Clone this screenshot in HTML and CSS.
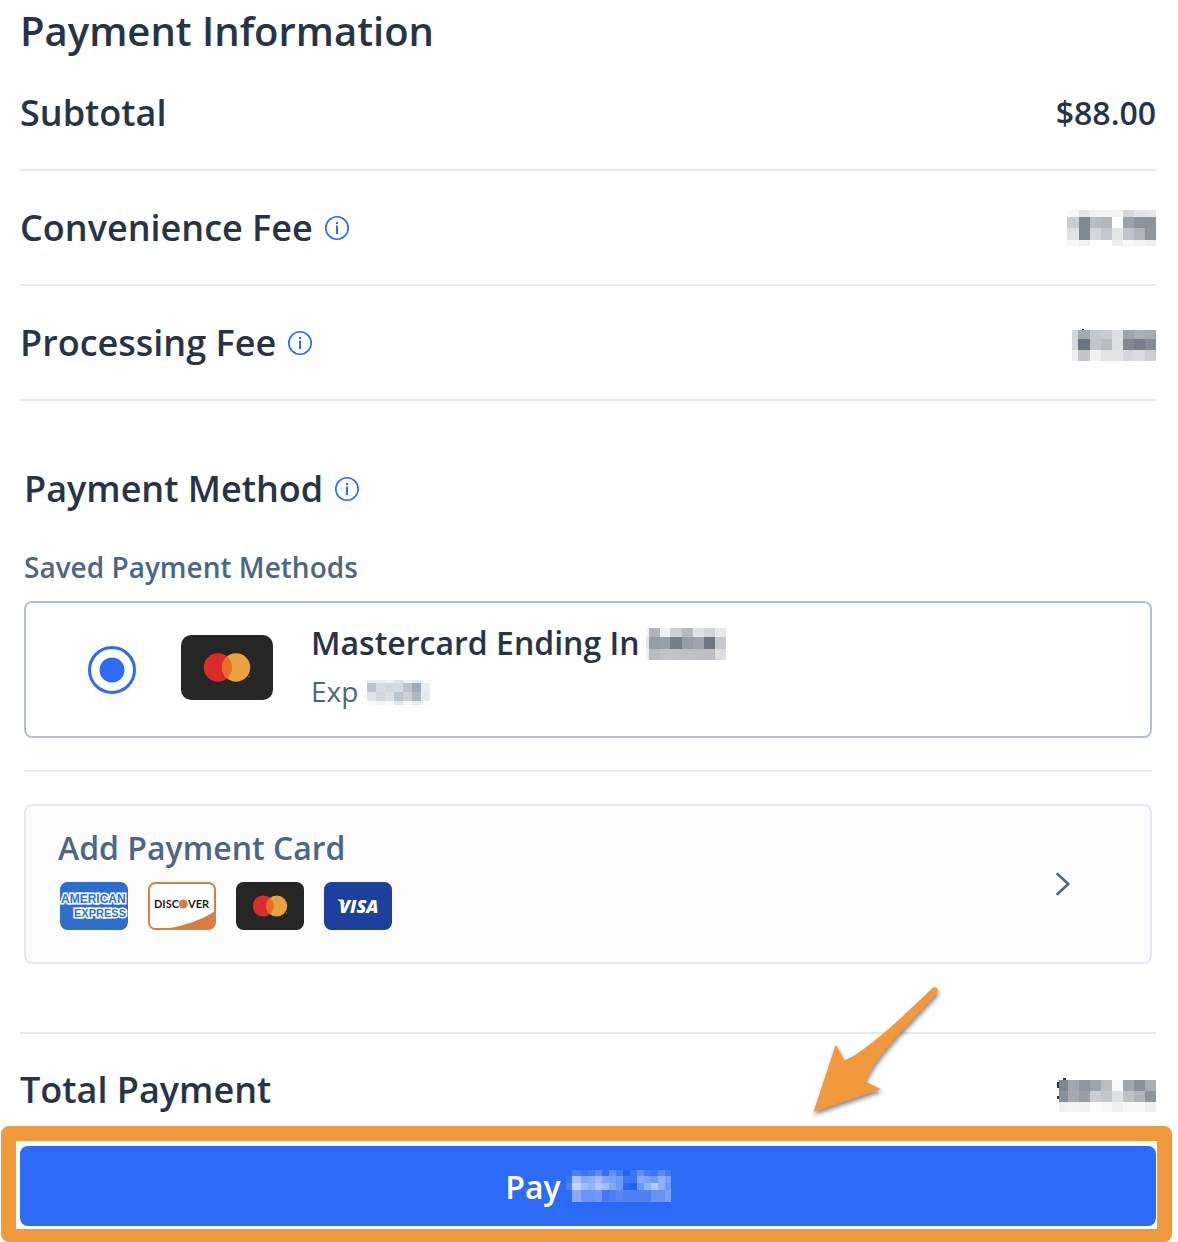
FILE: index.html
```
<!DOCTYPE html>
<html lang="en">
<head>
    <meta charset="UTF-8">
    <meta name="viewport" content="width=device-width, initial-scale=1.0">
    <title>Payment Information</title>
    <link rel="stylesheet" href="styles.css">
</head>
<body>
    <!-- Shared symbols -->
    <svg class="symbols" aria-hidden="true">
        <symbol id="icon-info" viewBox="0 0 24 24">
            <circle cx="12" cy="12" r="11.2" fill="none" stroke="currentColor" stroke-width="1.6"/>
            <circle cx="12" cy="6.9" r="1.2" fill="currentColor"/>
            <path d="M12 9.5V18" stroke="currentColor" stroke-width="2"/>
        </symbol>
        <symbol id="logo-mastercard" viewBox="0 0 68 48">
            <rect width="68" height="48" rx="7.5" fill="#262626"/>
            <circle cx="27.3" cy="24" r="10.5" fill="#d92d2a"/>
            <circle cx="40.7" cy="24" r="10.5" fill="#e8a341"/>
            <path d="M34 15.900a10.500 10.500 0 0 1 0 16.200a10.500 10.500 0 0 1 0-16.200z" fill="#ed6a2d"/>
            <circle cx="50.3" cy="30.700" r="0.5" fill="#e8a341"/>
        </symbol>
    </svg>

    <main class="payment">
        <h1>Payment Information</h1>

        <!-- Fees -->
        <div class="row">
            <h2>Subtotal</h2>
            <span class="amount">$88.00</span>
        </div>
        <div class="row">
            <h2>Convenience Fee</h2>
            <button type="button" class="info" aria-label="About the convenience fee"><svg><use href="#icon-info"/></svg></button>
            <svg class="mask" data-mask="convenience"></svg>
        </div>
        <div class="row">
            <h2>Processing Fee</h2>
            <button type="button" class="info" aria-label="About the processing fee"><svg><use href="#icon-info"/></svg></button>
            <svg class="mask" data-mask="processing"></svg>
        </div>

        <!-- Payment method -->
        <section class="methods">
            <div class="methods-title">
                <h2>Payment Method</h2>
                <button type="button" class="info" aria-label="About payment methods"><svg><use href="#icon-info"/></svg></button>
            </div>
            <h3>Saved Payment Methods</h3>
            <div class="saved-card">
                <input type="radio" name="method" id="saved-mastercard" checked>
                <label class="saved-label" for="saved-mastercard">
                    <svg class="saved-logo" viewBox="0 0 68 48"><use href="#logo-mastercard"/></svg>
                    <span class="saved-text">
                        <span class="saved-name">Mastercard Ending In <svg class="mask" data-mask="digits"></svg></span>
                        <span class="saved-exp">Exp <svg class="mask" data-mask="expiry"></svg></span>
                    </span>
                </label>
            </div>
            <hr>
            <button type="button" class="add-card">
                <span class="add-body">
                    <span class="add-title">Add Payment Card</span>
                    <span class="logos">
                        <svg class="logo" viewBox="0 0 68 48">
                            <rect width="68" height="48" rx="7.5" fill="#2f6fcb"/>
                            <text class="amex-text" x="1" y="21">AMERICAN</text>
                            <text class="amex-text amex-small" x="14" y="35">EXPRESS</text>
                        </svg>
                        <svg class="logo" viewBox="0 0 68 48">
                            <rect x="1" y="1" width="66" height="46" rx="6.5" fill="#fff"/>
                            <path d="M67 29C54 38 36 44 16 47H60.500a6.500 6.500 0 0 0 6.500-6.500z" fill="#d67e43"/>
                            <rect x="1" y="1" width="66" height="46" rx="6.5" fill="none" stroke="#d67e43" stroke-width="2"/>
                            <text class="discover-text" x="6" y="26">DISC</text>
                            <circle cx="35.300" cy="22" r="4.500" fill="#d67e43"/>
                            <text class="discover-text" x="40" y="26">VER</text>
                        </svg>
                        <svg class="logo" viewBox="0 0 68 48"><use href="#logo-mastercard"/></svg>
                        <svg class="logo" viewBox="0 0 68 48">
                            <rect width="68" height="48" rx="7.5" fill="#1d409c"/>
                            <path d="M13 17.500h6l2 5z" fill="#fff"/>
                            <text class="visa-text" x="15" y="31">VISA</text>
                        </svg>
                    </span>
                </span>
                <svg class="chevron" viewBox="0 0 14 24"><path d="M1.500 2L12.300 12L1.500 22" fill="none" stroke="currentColor" stroke-width="2.600" stroke-linecap="round" stroke-linejoin="round"/></svg>
            </button>
        </section>

        <!-- Total -->
        <div class="row total">
            <h2>Total Payment</h2>
            <svg class="mask" data-mask="total"></svg>
        </div>
        <div class="pay">
            <button type="button" class="pay-button">Pay <svg class="mask" data-mask="pay"></svg></button>
            <div class="highlight"></div>
            <svg class="arrow" viewBox="0 0 170 160" aria-hidden="true">
                <path d="M23.500 142L45.800 74.500L54.500 90.500C78 80 111 48 142.500 18C146 15.500 149.500 19 147 23C122 52 86 84 75.300 111.500L91 119.300Z" fill="#f2993e"/>
            </svg>
        </div>
    </main>

    <script src="masks.js"></script>
</body>
</html>
```

FILE: styles.css
```
* { margin: 0; padding: 0; box-sizing: border-box; }
body {
    font-family: "Open Sans", "Noto Sans", sans-serif;
    background: white; color: #283445;
}
button { font: inherit; border: none; background: none; cursor: pointer; }
svg { display: block; }
.symbols { position: absolute; width: 0; height: 0; }

.payment { padding: 6px 22px 16px 20px; }

h1 { font-size: 40px; line-height: 50px; font-weight: 600; }
h2 { font-size: 36px; line-height: 48px; font-weight: 600; }
h3 {
    font-size: 28px; line-height: 40px; font-weight: 600;
    color: #4c6785; margin: 34px 0 14px;
}

.row {
    display: flex; align-items: center;
    min-height: 115px; border-bottom: 2px solid #e3e8f1;
}
.row .mask, .amount { margin-left: auto; }
.amount { font-size: 32px; font-weight: 600; }
.mask { flex: none; }

.info { margin-left: 12px; color: #2d6bf4; }
.info svg { width: 24px; height: 24px; }

.methods { padding: 64px 4px 68px; }
.methods-title { display: flex; align-items: center; }

.saved-card {
    display: flex; align-items: center;
    padding-left: 62px; border: 2px solid #b0c0d6; border-radius: 8px;
}
.saved-card input {
    appearance: none; flex: none; width: 48px; height: 48px;
    border: 3px solid #2d6bf4; border-radius: 50%;
    background: radial-gradient(circle, #2d6bf4 12px, white 13px);
}
.saved-label {
    flex: 1; display: flex; align-items: center; gap: 38px;
    padding: 16px 0 21px 45px; cursor: pointer;
}
.saved-logo { width: 92px; height: 65px; }
.saved-name, .saved-exp { display: flex; align-items: center; line-height: 48px; }
.saved-name { font-size: 32px; font-weight: 600; gap: 6px; }
.saved-exp { font-size: 28px; color: #4c6785; gap: 9px; }

hr { border: none; border-top: 2px solid #e3e8f1; margin: 32px 0; }

.add-card {
    display: flex; align-items: center; justify-content: space-between;
    width: 100%; padding: 20px 80px 32px 32px; text-align: left;
    background: #fcfcfd; border: 2px solid #e3e8f1; border-radius: 8px;
    color: #4c6785;
}
.add-title { display: block; font-size: 32px; line-height: 44px; font-weight: 600; }
.logos { display: flex; gap: 20px; margin: 12px 0 0 2px; }
.logo { width: 68px; height: 48px; }
.chevron { width: 14px; height: 24px; margin-top: 12px; }

.amex-text {
    font: bold 12px "Liberation Sans", sans-serif;
    fill: #2f6fcb; stroke: white; stroke-width: 3px; paint-order: stroke;
}
.amex-small { font-size: 11px; }
.discover-text { font: bold 11px Lato, sans-serif; fill: #1b1b1b; }
.visa-text { font: italic 800 18px "Open Sans", sans-serif; fill: white; }

.methods + .total { border-top: 2px solid #e3e8f1; border-bottom: none; min-height: 114px; }

.pay { position: relative; }
.pay-button {
    display: flex; align-items: center; justify-content: center; gap: 5px;
    width: 100%; min-height: 80px; border-radius: 8px;
    background: #2d6bf4; color: white; font-size: 32px; font-weight: 600;
}
.highlight {
    position: absolute; inset: -20px -16px -16px -19px;
    border: 15px solid #f2993e; border-bottom-width: 13px;
    border-radius: 8px; pointer-events: none;
}
.arrow {
    position: absolute; top: -176px; right: 196px;
    width: 170px; height: 160px; pointer-events: none;
    filter: drop-shadow(1px 3px 2px rgba(0, 0, 0, 0.45));
}
```

FILE: masks.js
```
// Pixelated covers for private values: x and y are cell edges, rows are colours
const masks = {
    convenience: {
        x: [0, 12, 23, 34, 45, 56, 67, 78, 89], y: [0, 7, 18, 30, 36],
        rows: ['f8f8f8 e3e5e6 f1f1f2 f1f1f2 f3f4f4 d5d6da e3e4e5 e7e8e8',
               'cbccd1 828892 babdc0 b3b7ba ffffff 9ea3ab 8d939c 8d949b',
               'e1e2e4 828892 d5d6da c5c7cd e3e4e6 c2c3c9 b1b4ba 8f969e',
               'f8f9f9 f0f1f1 ffffff feffff edeeee f9f9f9 f4f4f4 eeefef']
    },
    processing: {
        x: [0, 6, 18, 29, 40, 51, 62, 73, 84], y: [6, 15, 26, 37],
        rows: ['d5d6d9 a4a9af c4c7cb cacccf dfe0e3 a0a5ac adb0b5 a6abb0',
               'd5d6d9 6e7480 c2c5c8 b9bbc1 dfe0e3 828892 787e89 858b95',
               'efeff0 c3c5c9 eff0f0 e2e3e5 e2e3e5 d5d6d9 dadbdf cdced3'],
        bits: [[10, 5, 2, 1]]
    },
    digits: {
        x: [0, 3, 14, 24, 36, 47, 58, 69, 80], y: [2, 11, 23, 34],
        rows: ['f4f4f5 b0b4b9 eff0f1 ced0d3 b6b9be e0e1e4 d3d4d7 e9e9eb',
               'e6e7e9 969ba4 9a9ea7 757d87 969ba4 a0a3ad 6e7480 c8c9ce',
               'f1f1f2 b9bbc1 c2c4c8 c0c3c7 bfc1c6 bdbfc5 bdbfc5 dddee0']
    },
    expiry: {
        x: [0, 9, 18, 27, 36, 45, 54, 63], y: [2, 5, 14, 23, 27],
        rows: ['e9ecef e9ebee eff1f2 e0e4e9 f2f3f5 e6e9ed fafafb',
               'bac3ce d6dbe1 d2d7dd d5dae0 bac3ce 9fabba e9ecf1',
               'e0e4e9 d2d6de dbdfe4 bac3ce cbd1d9 afb9c5 e6e8ed',
               'f8f9fa f5f6f7 f8f8f9 e4e7eb f9f9fa e8ebef fafbfb']
    },
    total: {
        x: [2, 11, 22, 33, 44, 55, 66, 77, 88, 99], y: [12, 23, 34, 44],
        rows: ['7f8590 a3a6ae 8f959d 9fa3aa babdc1 fafafa a0a5ac 8a909a aaafb4',
               '8a919a a6a9b0 9a9ea7 cdced2 c5c7cb e0e1e3 bfc1c5 b1b4b9 8f959d',
               'eff0f1 f4f4f5 f1f2f2 fdfdfd f6f6f6 eff0f0 f8f8f9 f8f8f9 eff0f0'],
        bits: [[0, 14, 2, 6], [0, 28, 2, 3], [6, 10, 3, 2]]
    },
    pay: {
        x: [0, 6, 15, 22, 29, 36, 43, 50, 57, 64, 71, 78, 85, 92, 99, 105], y: [7, 13, 20, 27, 39, 46],
        rows: ['2d6bf4 4a80f6 3d76f5 477ef6 5b8cf7 3470f5 5f8ff7 477ef6 2563ef 3c75f5 6591f7 477ef6 3d76f5 5a8cf7 447bf5',
               '3a74f5 a9c4fb 85a9f9 8aaef9 9dbbfa 7ea4f9 7aa0f8 6f99f8 4179f5 3d77f5 85a9f9 7ba1f8 7099f7 8fb1f9 7aa1f8',
               '4b81f6 c4d6fc a4c0fa 94b4fa b0c8fb a4bffa 85a9f9 6e98f7 2d67ef 2261ec 6b95f8 92b2fa b4cbfb 8fb0f9 6d97f7',
               '2e6bf3 88acf9 6a95f8 6a95f8 729bf8 4378f2 4a80f4 5587f4 4e82f4 4e82f4 4e82f4 4e82f4 6792f6 6792f6 7ba3f8',
               '2b69f2 2b69f2 2b69f2 2b69f2 2b69f2 2b69f2 2b69f2 2b69f2 2b69f2 2b69f2 2b69f2 2b69f2 2b69f2 2b69f2 2b69f2']
    }
};

function addRect(svg, x, y, width, height, fill) {
    const rect = document.createElementNS('http://www.w3.org/2000/svg', 'rect');
    Object.entries({ x, y, width, height, fill }).forEach(([name, value]) => rect.setAttribute(name, value));
    svg.appendChild(rect);
}

document.querySelectorAll('[data-mask]').forEach(svg => {
    const { x, y, rows, bits = [] } = masks[svg.dataset.mask];
    svg.setAttribute('width', x[x.length - 1]);
    svg.setAttribute('height', y[y.length - 1]);
    svg.setAttribute('shape-rendering', 'crispEdges');
    rows.forEach((row, r) => {
        row.split(' ').forEach((colour, c) => {
            addRect(svg, x[c], y[r], x[c + 1] - x[c], y[r + 1] - y[r], '#' + colour);
        });
    });
    bits.forEach(bit => addRect(svg, ...bit, '#283445'));
});
```
